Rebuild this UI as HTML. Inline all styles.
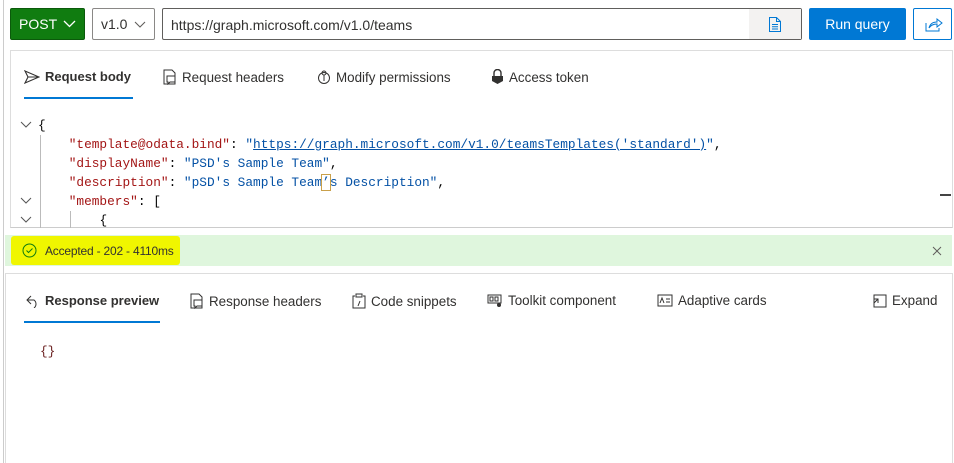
<!DOCTYPE html>
<html style="width:954px;height:463px;overflow:hidden"><head><meta charset="utf-8"><style>
*{margin:0;padding:0;box-sizing:border-box}
body{width:954px;height:463px;background:#fff;font-family:"Liberation Sans",sans-serif;position:relative;overflow:hidden;color:#323130}
.a{position:absolute}
.code{font-family:"Liberation Mono",monospace;font-size:12.8px;white-space:pre;line-height:19px}
.k{color:#a31515}.s{color:#0451a5}.p{color:#000}
.tab{position:absolute;font-size:13.4px;color:#323130;display:flex;align-items:center;gap:5px}
.b{font-size:13px;font-weight:bold}
</style></head><body>
<div class="a" style="left:3px;top:0;width:1px;height:463px;background:#ccc"></div>
<!-- top bar -->
<div class="a" style="left:10px;top:8px;width:75px;height:32px;background:#107c10;border:1px solid #0b5a0b;border-radius:2px;color:#fff;font-size:14px;line-height:30px;padding-left:8px">POST
<svg class="a" style="left:52px;top:11px" width="13" height="8"><path d="M1 1l5.5 5.5L12 1" stroke="#fff" fill="none" stroke-width="1.3"/></svg></div>
<div class="a" style="left:92px;top:8px;width:63px;height:32px;border:1px solid #8a8886;border-radius:2px;font-size:14px;line-height:30px;padding-left:8px">v1.0
<svg class="a" style="left:41px;top:12px" width="12" height="7"><path d="M1 1l5 5 5-5" stroke="#605e5c" fill="none" stroke-width="1.1"/></svg></div>
<div class="a" style="left:162px;top:8px;width:640px;height:32px;border:1px solid #605e5c;border-radius:2px;font-size:14px;line-height:32px;padding-left:8px">https://graph.microsoft.com/v1.0/teams
<div class="a" style="right:0;top:0;width:52px;height:30px;background:#f3f2f1"></div>
<svg class="a" style="left:605px;top:7px" width="14" height="17"><path d="M1.5 1.5h7l4 4v10h-11z M8.5 1.5v4h4 M4 8.5h6M4 10.8h6M4 13h6" stroke="#0078d4" fill="none" stroke-width="1"/></svg></div>
<div class="a" style="left:809px;top:8px;width:97px;height:32px;background:#0078d4;border-radius:2px;color:#fff;font-size:14px;line-height:33px;text-align:center">Run query</div>
<div class="a" style="left:913px;top:8px;width:39px;height:32px;border:1px solid #0078d4;border-radius:2px">
<svg class="a" style="left:11px;top:8px" width="18" height="15"><path d="M1 6v8h13v-3 M4 11c1-4 4-6 8-6V2l5 4-5 4V7c-3 0-6 1-8 4z" stroke="#0078d4" fill="none" stroke-width="1"/></svg></div>
<!-- request panel -->
<div class="a" style="left:10px;top:50px;width:943px;height:178px;border:1px solid #ddd;border-bottom:1px solid #ccc"></div>
<div class="tab b" style="left:24px;top:69px"><svg width="16" height="14"><path d="M1 1l14 6-14 6 3-6z M4 7h11" stroke="#323130" fill="none" stroke-width="1.1"/></svg>Request body</div>
<div class="a" style="left:24px;top:97px;width:109px;height:2px;background:#0078d4"></div>
<div class="tab" style="left:163px;top:69px"><svg width="14" height="16"><path d="M1 1h8l3 3v11H1z M4 7h8v6H7l-2 2v-2H4z" stroke="#323130" fill="none" stroke-width="1"/></svg>Request headers</div>
<div class="tab" style="left:317px;top:69px"><svg width="14" height="16"><circle cx="7" cy="9" r="5.5" stroke="#323130" fill="none"/><circle cx="7" cy="4" r="2" stroke="#323130" fill="none"/><path d="M7 6v6" stroke="#323130"/></svg>Modify permissions</div>
<div class="tab" style="left:491px;top:69px"><svg width="13" height="16"><path d="M3 7V4a3.5 3.5 0 0 1 7 0v3" stroke="#323130" fill="none" stroke-width="1.4"/><path d="M1 7h11v5l-5.5 3L1 12z" fill="#323130"/></svg>Access token</div>
<!-- code -->
<svg class="a" style="left:20px;top:121px" width="12" height="8"><path d="M1 1l5 5 5-5" stroke="#555" fill="none"/></svg>
<svg class="a" style="left:20px;top:197px" width="12" height="8"><path d="M1 1l5 5 5-5" stroke="#555" fill="none"/></svg>
<svg class="a" style="left:20px;top:216px" width="12" height="8"><path d="M1 1l5 5 5-5" stroke="#555" fill="none"/></svg>
<div class="a" style="left:40px;top:135px;width:1px;height:93px;background:#bbb"></div>
<div class="a" style="left:70px;top:211px;width:1px;height:17px;background:#bbb"></div>
<div class="a code" style="left:38px;top:116px;height:111px;overflow:hidden"><span class="p">{</span>
    <span class="k">"template@odata.bind"</span><span class="p">: </span><span class="s">"<u>https://graph.microsoft.com/v1.0/teamsTemplates('standard')</u>"</span><span class="p">,</span>
    <span class="k">"displayName"</span><span class="p">: </span><span class="s">"PSD's Sample Team"</span><span class="p">,</span>
    <span class="k">"description"</span><span class="p">: </span><span class="s">"pSD's Sample Team<span style="outline:1px solid #c9a04a">’</span>s Description"</span><span class="p">,</span>
    <span class="k">"members"</span><span class="p">: [</span>
        <span class="p">{</span></div>
<div class="a" style="left:940px;top:194px;width:11px;height:2px;background:#444"></div>
<!-- status -->
<div class="a" style="left:5px;top:235px;width:947px;height:31px;background:#dff6dd"></div>
<div class="a" style="left:11px;top:236px;width:169px;height:29px;background:#f0f600;border-radius:3px"></div>
<svg class="a" style="left:22px;top:243px" width="15" height="15"><circle cx="7.5" cy="7.5" r="6.5" stroke="#107c10" fill="none"/><path d="M4.5 7.5l2 2 4-4" stroke="#107c10" fill="none"/></svg>
<div class="a" style="left:45px;top:244px;font-size:12px;color:#323130;letter-spacing:-0.2px">Accepted - 202 - 4110ms</div>
<svg class="a" style="left:932px;top:246px" width="10" height="10"><path d="M1 1l8 8M9 1l-8 8" stroke="#605e5c"/></svg>
<!-- response panel -->
<div class="a" style="left:5px;top:273px;width:948px;height:190px;border:1px solid #ddd;border-bottom:none"></div>
<div class="tab b" style="left:26px;top:293px"><svg width="14" height="14"><path d="M5 2L1 6l4 4 M1 6h7a5 5 0 0 1 0 8" stroke="#323130" fill="none"/></svg>Response preview</div>
<div class="a" style="left:24px;top:321px;width:136px;height:2px;background:#0078d4"></div>
<div class="tab" style="left:190px;top:293px"><svg width="14" height="16"><path d="M1 1h8l3 3v11H1z M4 7h8v6H7l-2 2v-2H4z" stroke="#323130" fill="none"/></svg>Response headers</div>
<div class="tab" style="left:352px;top:293px"><svg width="14" height="16"><path d="M3 3H1v12h12V3h-2 M4 1h6v3H4z M6 13l2-5" stroke="#323130" fill="none"/></svg>Code snippets</div>
<div class="tab" style="left:487px;top:293px"><svg width="16" height="14"><path d="M1 1h13v8H1z M3 3h3v4H3z M8 3h3v4H8z" stroke="#323130" fill="none"/><circle cx="12" cy="11" r="2" fill="#323130"/></svg>Toolkit component</div>
<div class="tab" style="left:657px;top:293px"><svg width="16" height="13"><path d="M1 1h14v11H1z M3 9l2-5 2 5 M9 5h4M9 8h4" stroke="#323130" fill="none"/></svg>Adaptive cards</div>
<div class="tab" style="left:873px;top:293px"><svg width="14" height="14"><path d="M1 1h12v12H1z M1 5h4v4 M1 9l4-4" stroke="#323130" fill="none"/></svg>Expand</div>
<div class="a code" style="left:40px;top:342px;color:#6b2020">{}</div>
</body></html>
